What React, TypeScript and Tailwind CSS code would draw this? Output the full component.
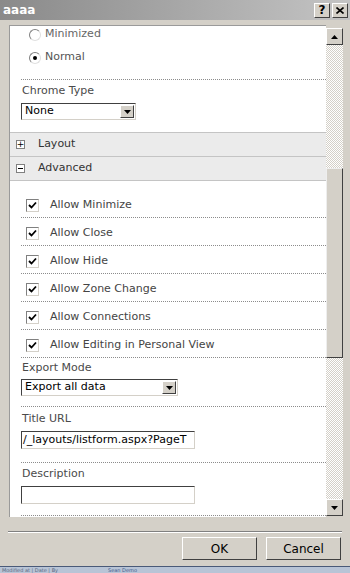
import React from 'react'

const font = { fontFamily: '"DejaVu Sans", Verdana, sans-serif' }

function Radio({ checked }: { checked?: boolean }) {
  return (
    <span className="relative inline-block h-[12px] w-[12px] rounded-full border border-t-[#808080] border-l-[#808080] border-b-[#e0e0e0] border-r-[#e0e0e0] bg-white">
      {checked && <span className="absolute left-[3px] top-[3px] h-[4px] w-[4px] rounded-full bg-black" />}
    </span>
  )
}

function Check() {
  return (
    <span className="flex h-[13px] w-[13px] items-center justify-center border border-t-[#808080] border-l-[#808080] border-b-[#d4d0c8] border-r-[#d4d0c8] bg-white">
      <svg width="9" height="9" viewBox="0 0 9 9">
        <path d="M1 4 L3.5 6.5 L8 1.5" fill="none" stroke="#000" strokeWidth="1.8" />
      </svg>
    </span>
  )
}

function DropArrow() {
  return (
    <span className="flex h-[13px] w-[14px] items-center justify-center border border-t-white border-l-white border-b-[#404040] border-r-[#404040] bg-[#d4d0c8]">
      <svg width="7" height="4" viewBox="0 0 7 4">
        <path d="M0 0 H7 L3.5 4 Z" fill="#000" />
      </svg>
    </span>
  )
}

function Select({ width, value }: { width: string; value: string }) {
  return (
    <div className={`flex h-[17px] items-center justify-between border border-t-[#404040] border-l-[#404040] border-b-[#d4d0c8] border-r-[#d4d0c8] bg-white pl-[3px] pr-[1px] ${width}`}>
      <span className="text-[11px] text-black">{value}</span>
      <DropArrow />
    </div>
  )
}

function TextBox({ value }: { value?: string }) {
  return (
    <div className="flex h-[18px] w-[174px] items-center overflow-hidden whitespace-nowrap border border-t-[#404040] border-l-[#404040] border-b-[#d4d0c8] border-r-[#d4d0c8] bg-white pl-[1px]">
      <span className="text-[11px] text-black">{value}</span>
    </div>
  )
}

function ScrollButton({ up }: { up?: boolean }) {
  return (
    <div className="flex h-[17px] w-[17px] items-center justify-center border border-t-white border-l-white border-b-[#404040] border-r-[#404040] bg-[#d4d0c8]">
      <svg width="7" height="4" viewBox="0 0 7 4">
        <path d={up ? 'M0 4 H7 L3.5 0 Z' : 'M0 0 H7 L3.5 4 Z'} fill="#000" />
      </svg>
    </div>
  )
}

const checks = [
  'Allow Minimize',
  'Allow Close',
  'Allow Hide',
  'Allow Zone Change',
  'Allow Connections',
  'Allow Editing in Personal View',
]

export default function App() {
  return (
    <div className="flex h-[573px] w-[350px] flex-col overflow-hidden bg-[#d4d0c8]" style={font}>
      {/* title bar */}
      <div className="flex h-[20px] items-center justify-between bg-gradient-to-r from-[#8a8a8a] to-[#c4c4c4] pl-[3px] pr-[2px]">
        <span className="text-[12px] font-bold text-white">aaaa</span>
        <div className="flex gap-[2px]">
          <div className="flex h-[15px] w-[16px] items-center justify-center border border-t-white border-l-white border-b-[#404040] border-r-[#404040] bg-[#d4d0c8] text-[12px] font-bold leading-none text-black">?</div>
          <div className="flex h-[15px] w-[16px] items-center justify-center border border-t-white border-l-white border-b-[#404040] border-r-[#404040] bg-[#d4d0c8]">
            <svg width="8" height="7" viewBox="0 0 8 7">
              <path d="M0.5 0.5 L7.5 6.5 M7.5 0.5 L0.5 6.5" stroke="#000" strokeWidth="1.6" />
            </svg>
          </div>
        </div>
      </div>

      {/* body panel */}
      <div className="ml-[9px] mr-[7px] mt-[5px] flex h-[492px]">
        <div className="flex-1 overflow-hidden border-l border-t border-[#9a9a9a] bg-white text-[11px] text-[#4a4a4a]">
          <div className="mt-[-3px] pl-[11px]">
            <div className="flex h-[23px] items-center gap-[4px] pl-[8px] text-[#666]">
              <Radio />
              <span>Minimized</span>
            </div>
            <div className="flex h-[23px] items-center gap-[4px] pl-[8px] text-[#555]">
              <Radio checked />
              <span>Normal</span>
            </div>
            <div className="h-[11px] border-b border-dotted border-[#8c8c8c]" />
            <div className="pb-[12px]">
              <div className="flex h-[22px] items-center pl-[1px]">Chrome Type</div>
              <div className="mt-[1px]">
                <Select width="w-[115px]" value="None" />
              </div>
            </div>
          </div>

          {/* section headers */}
          <div className="flex h-[24px] items-center gap-[13px] border-t border-[#c4c4c4] bg-[#ebebeb] pl-[6px] text-[#333]">
            <span className="flex h-[9px] w-[9px] items-center justify-center border border-[#808080] bg-white text-[9px] leading-none text-black">+</span>
            <span>Layout</span>
          </div>
          <div className="flex h-[25px] items-center gap-[13px] border-y border-[#c4c4c4] bg-[#ebebeb] pl-[6px] text-[#333]">
            <span className="flex h-[9px] w-[9px] items-center justify-center border border-[#808080] bg-white">
              <span className="h-px w-[5px] bg-black" />
            </span>
            <span>Advanced</span>
          </div>

          <div className="pl-[11px] pt-[9px]">
            {checks.map((c) => (
              <div key={c} className="flex h-[28px] items-center gap-[11px] border-b border-dotted border-[#8c8c8c] pl-[5px] pt-[3px] text-[#444]">
                <Check />
                <span>{c}</span>
              </div>
            ))}
            <div className="border-b border-dotted border-[#8c8c8c] pb-[10px]">
              <div className="flex h-[21px] items-center pl-[1px]">Export Mode</div>
              <Select width="w-[157px]" value="Export all data" />
            </div>
            <div className="border-b border-dotted border-[#8c8c8c] pb-[13px]">
              <div className="flex h-[24px] items-center pl-[1px]">Title URL</div>
              <TextBox value="/_layouts/listform.aspx?PageT" />
            </div>
            <div className="border-b border-dotted border-[#8c8c8c] pb-[11px]">
              <div className="flex h-[23px] items-center pl-[1px]">Description</div>
              <TextBox />
            </div>
          </div>
        </div>

        {/* scrollbar */}
        <div className="flex w-[17px] flex-col pt-[3px] pb-[1px]">
          <ScrollButton up />
          <div className="h-[123px] bg-[repeating-conic-gradient(#d4d0c8_0_25%,#fff_0_50%)] bg-[length:2px_2px]" />
          <div className="h-[190px] border border-t-[#eeeeee] border-l-[#eeeeee] border-b-[#404040] border-r-[#404040] bg-[#d4d0c8]" />
          <div className="flex-1 bg-[repeating-conic-gradient(#d4d0c8_0_25%,#fff_0_50%)] bg-[length:2px_2px]" />
          <ScrollButton />
        </div>
      </div>

      {/* separator */}
      <div className="mx-[8px] mt-[14px] h-[2px] border-t border-b border-t-[#808080] border-b-white" />

      {/* buttons */}
      <div className="mt-[4px] flex justify-end gap-[9px] pr-[9px]">
        <button className="h-[23px] w-[75px] border border-t-white border-l-white border-b-[#404040] border-r-[#404040] bg-[#d4d0c8] text-[12px] text-black">OK</button>
        <button className="h-[23px] w-[75px] border border-t-white border-l-white border-b-[#404040] border-r-[#404040] bg-[#d4d0c8] text-[12px] text-black">Cancel</button>
      </div>

      {/* page behind the dialog */}
      <div className="mt-auto flex h-[7px] items-center overflow-hidden border-t border-[#4a5a78] bg-[#b8c4d6] pl-[2px] text-[5px] leading-[6px]">
        <span className="whitespace-nowrap text-[#5a6880]">Modified at | Date | By</span>
        <span className="ml-[50px] whitespace-nowrap text-[#3e5a8c] underline">Sean Demo</span>
      </div>
    </div>
  )
}
